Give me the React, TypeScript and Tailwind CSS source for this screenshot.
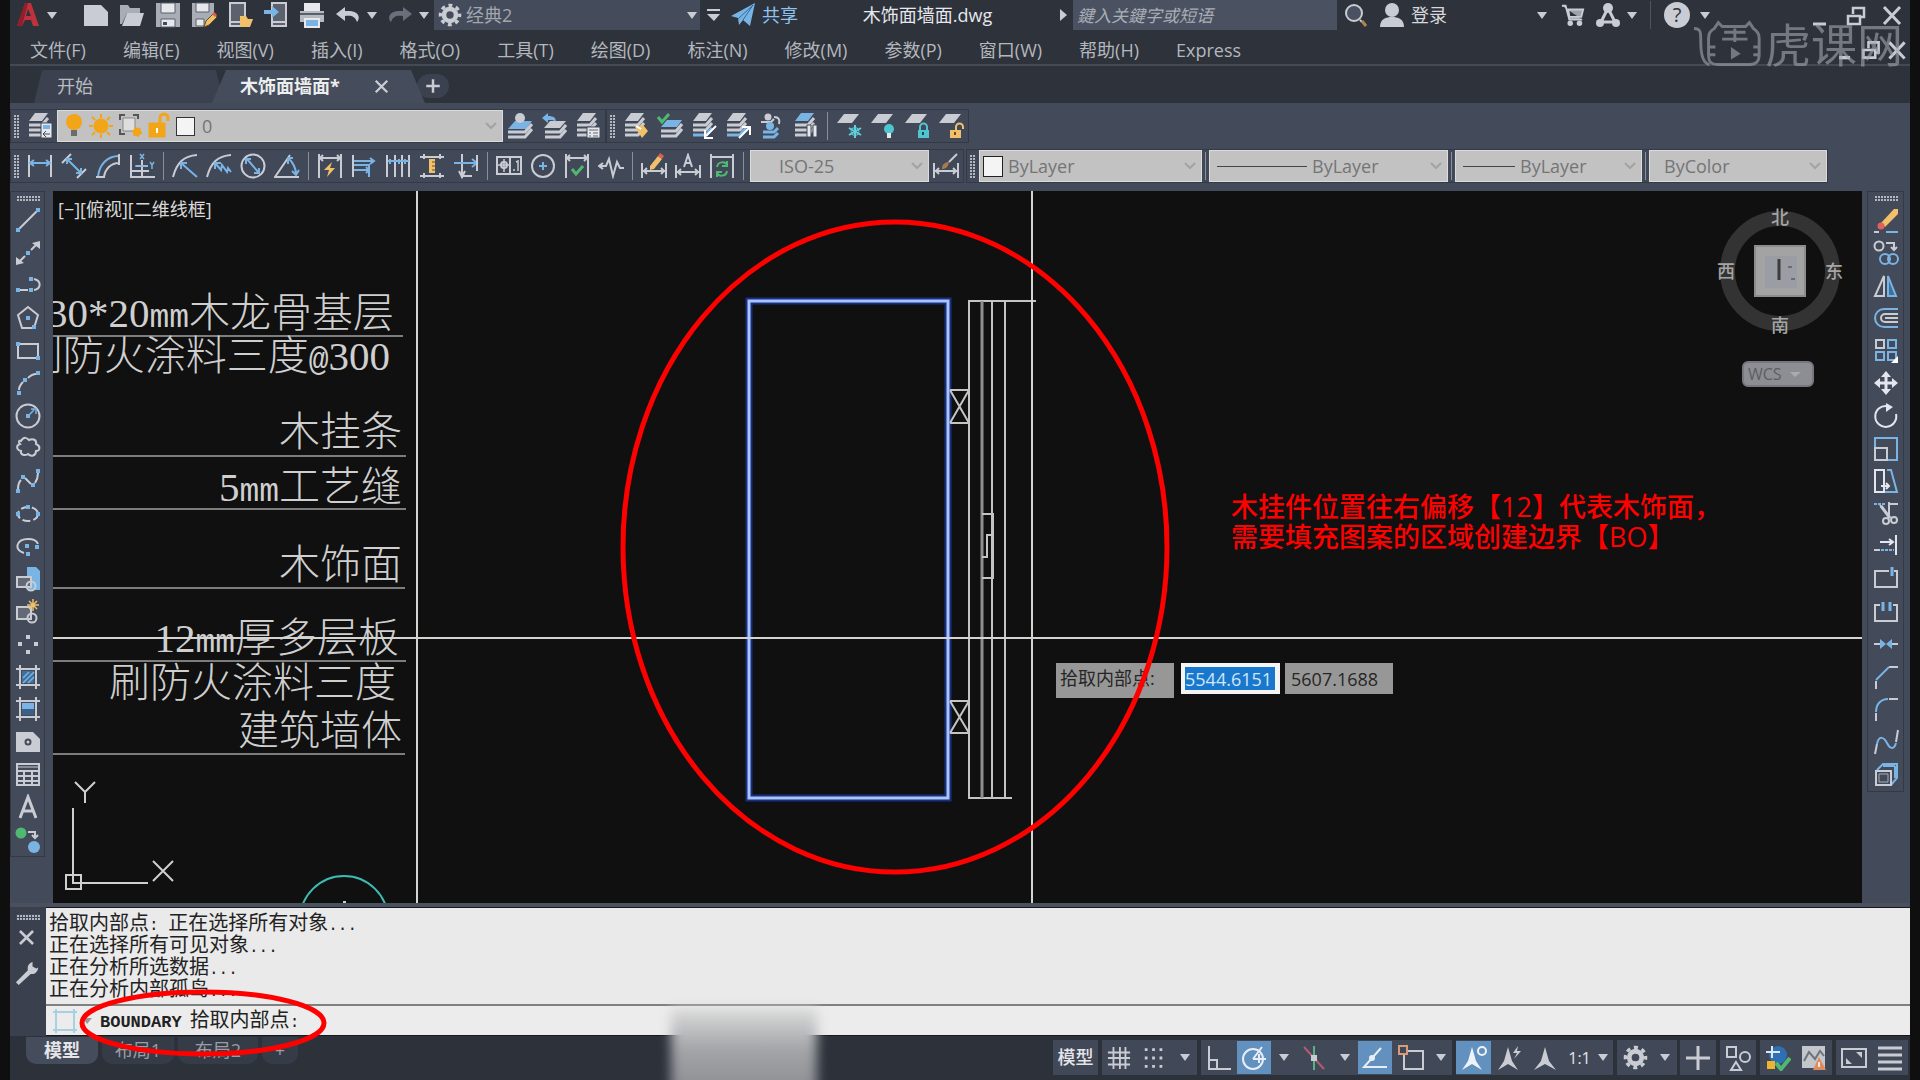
import type { ReactNode } from "react";
import clsx from "clsx";

const W = "#c9ccd3";
const B = "#7ab4e4";
const Y = "#f0c06a";
const G = "#4fb871";

interface IconProps {
  children: ReactNode;
  size?: number;
}

const Icon = ({ children, size = 26 }: IconProps) => (
  <svg
    width={size}
    height={size}
    viewBox="0 0 26 26"
    fill="none"
    stroke={W}
    strokeWidth="2"
    className="shrink-0"
    aria-hidden="true"
  >
    {children}
  </svg>
);

const Caret = () => (
  <svg width="10" height="7" viewBox="0 0 10 7" className="shrink-0" aria-hidden="true">
    <path d="M0 0h10L5 7z" fill={W} />
  </svg>
);

const Sheet = ({ y = 0, color = W }: { y?: number; color?: string }) => (
  <path d={`M8 ${1 + y}h15l-7 9H1z`} fill={color} stroke="none" />
);

const Layers = ({ top = W, mid = W, low = W }: { top?: string; mid?: string; low?: string }) => (
  <g strokeWidth="3">
    <path d="M8 0h13l-6 8H2z" fill={top} stroke="none" />
    <path d="M2 12h13l6-7" stroke={mid} />
    <path d="M2 17h13l6-7" stroke={mid} />
    <path d="M2 22h13l6-7" stroke={low} />
  </g>
);

const Gear = ({ size = 26 }: { size?: number }) => (
  <Icon size={size}>
    <circle cx="13" cy="13" r="6.5" strokeWidth="5" />
    <circle cx="13" cy="13" r="10.5" strokeWidth="3.5" strokeDasharray="4.2 4.05" strokeDashoffset="2" />
  </Icon>
);

// ---------- title bar icons ----------

const quickIcons: { name: string; icon: ReactNode }[] = [
  { name: "新建", icon: <path d="M1 3h17l7 7v14H1z" fill={W} stroke="none" /> },
  {
    name: "打开",
    icon: (
      <>
        <path d="M1 3h8l2 3h10v5H8L3 22H1z" fill="#a9adb5" stroke="none" />
        <path d="M8 11h17l-4 13H3z" fill={W} stroke="none" />
      </>
    ),
  },
  {
    name: "保存",
    icon: (
      <>
        <path d="M1 1h24v24H1z" fill="#a9adb5" stroke="none" />
        <path d="M6 1h14v10H6z" fill="#e6e8ec" stroke="#59606d" strokeWidth="1" />
        <path d="M6 17h14v8H6z" fill="#e6e8ec" stroke="#59606d" strokeWidth="1" />
        <path d="M8 20h4v3H8z" fill="#434a57" stroke="none" />
      </>
    ),
  },
  {
    name: "另存为",
    icon: (
      <>
        <path d="M1 1h22v12L12 25H1z" fill="#a9adb5" stroke="none" />
        <path d="M5 1h13v9H5zM5 17h8v7H5z" fill="#e6e8ec" stroke="#59606d" strokeWidth="1" />
        <path d="M13 25l2-6 8-8 3 4-8 8z" fill={Y} stroke="#6b4a20" strokeWidth="1" />
        <path d="M21 12l2-2 3 3-2 2z" fill="#e0604f" stroke="none" />
      </>
    ),
  },
  {
    name: "从移动设备打开",
    icon: (
      <>
        <path d="M3 1h15v23H3z" fill="#5b616d" stroke={W} />
        <path d="M3 20h15" />
        <path d="M13 14h6l2 3h5l-3 8H13z" fill={Y} stroke="none" />
      </>
    ),
  },
  {
    name: "保存到移动设备",
    icon: (
      <>
        <path d="M9 1h14v23H9z" fill="#5b616d" stroke={W} />
        <path d="M9 20h14" />
        <path d="M1 8h8V4l7 6-7 6v-4H1z" fill={B} stroke="none" />
      </>
    ),
  },
  {
    name: "打印",
    icon: (
      <>
        <path d="M5 1h16v8H5z" fill="#e6e8ec" stroke="none" />
        <path d="M1 9h24v11H1z" fill="#b6bac1" stroke="none" />
        <path d="M1 12h24" stroke="#59606d" />
        <path d="M6 17h14v8H6z" fill={B} stroke="#e6e8ec" />
      </>
    ),
  },
  {
    name: "放弃",
    icon: <path d="M10 5L1 12l9 7v-5c6-1 10 0 12 6 3-3 4-12-12-11z" fill={W} stroke="none" />,
  },
];

// ---------- layer toolbars ----------

const layerProps = (
  <>
    <Layers />
    <path d="M14 10h11v15H14z" fill="#e6e8ec" stroke="#434a5a" strokeWidth="1" />
    <path d="M16 12h7v4h-7z" fill={B} stroke="none" />
    <path d="M16 21h7M19 18l-3 3 3 3" stroke="#434a5a" strokeWidth="1" />
  </>
);

const layerIcons: ReactNode[] = [
  <>
    <path d="M8 8h17l-6 8H1z" fill={B} stroke="none" />
    <path d="M1 19h17l7-8M1 24h17l7-8" strokeWidth="3" />
    <circle cx="13" cy="5" r="5" fill={W} stroke="none" />
  </>,
  <>
    <path d="M9 8h16l-6 7H3z" fill={W} stroke="none" />
    <path d="M4 19h15l6-7M4 24h15l6-7" strokeWidth="3" />
    <path d="M1 5l6-5v3c6 0 8 2 8 6-2-2-4-2-8-2v3z" fill={B} stroke="none" />
  </>,
  <>
    <Layers />
    <path d="M12 14h13v11H12z" fill="#e6e8ec" stroke="#434a5a" strokeWidth="1" />
    <path d="M14 17h9M14 20h2m2 0h5M14 23h2m2 0h5" stroke="#636977" strokeWidth="1" />
  </>,
];

const layerIcons2: ReactNode[] = [
  <>
    <Layers />
    <path d="M12 14l8-2 5 6-6 7z" fill={Y} stroke="none" />
    <path d="M13 13l5 3" stroke="#fff" />
  </>,
  <>
    <path d="M1 4l4 5 7-8" stroke={G} strokeWidth="3" />
    <path d="M10 7h15l-5 7H4z" fill={B} stroke="none" />
    <path d="M4 18h15l6-7M4 23h15l6-7" strokeWidth="3" />
  </>,
  <>
    <Layers low={B} />
    <path d="M25 13L15 23M14 17v8h8" stroke="#fff" />
  </>,
  <>
    <Layers low={B} />
    <path d="M14 25l10-10M17 14h8v8" stroke="#fff" />
  </>,
  <>
    <circle cx="9" cy="4" r="3.5" fill={W} stroke="none" />
    <path d="M2 9h10l3-3" />
    <path d="M15 4c5 0 6 3 5 7" />
    <circle cx="11" cy="13" r="4" fill={B} stroke="none" />
    <path d="M4 19h11l4-4M4 24h11l4-4" stroke={B} strokeWidth="3" />
  </>,
  <>
    <Layers top={B} />
    <path d="M14 12h4v12h-4zM20 12h4v12h-4z" fill="#e6e8ec" stroke="#434a5a" strokeWidth="1" />
  </>,
];

const layerIcons3: ReactNode[] = [
  <>
    <Sheet />
    <g stroke="#5fd0dc" strokeWidth="2">
      <path d="M19 12v13M13 15l12 7M25 15l-12 7" />
      <circle cx="19" cy="18.5" r="4" strokeWidth="1" />
    </g>
  </>,
  <>
    <Sheet />
    <circle cx="19" cy="16" r="5" fill="#4fc6cf" stroke="none" />
    <path d="M19 20v5" stroke="#e6e8ec" strokeWidth="4" />
  </>,
  <>
    <Sheet />
    <path d="M16 18v-4a3 3 0 0 1 7 0v4" stroke="#4fc6cf" />
    <path d="M14 17h11v8H14z" fill="#4fc6cf" stroke="none" />
    <path d="M19 19v3" stroke="#23474b" />
  </>,
  <>
    <Sheet />
    <path d="M18 18v-4a3 3 0 0 1 7 0v2" stroke={Y} />
    <path d="M12 17h11v8H12z" fill={Y} stroke="none" />
    <path d="M17 19v3" stroke="#6b4a20" />
  </>,
];

// ---------- dimension toolbar ----------

const dimA: ReactNode[] = [
  <>
    <path d="M2 2v22M24 2v22" />
    <path d="M3 10h20M7 7l-4 3 4 3M19 7l4 3-4 3" stroke={B} />
  </>,
  <>
    <path d="M1 10l9-9M16 25l9-9" />
    <path d="M6 6l14 14M6 11V6h5M15 20h5v-5" stroke={B} />
  </>,
  <>
    <path d="M3 24C4 12 12 3 24 3" stroke={B} />
    <path d="M1 24h9M9 24c1-8 7-14 15-14M24 1v11" />
  </>,
  <>
    <path d="M2 2v22h24M7 13h12M13 7v17M2 18h18" />
    <path d="M11 1l4 5M15 1l-4 5M21 9l2 3 2-3M23 12v4M6 13h13" stroke={B} strokeWidth="1.5" />
  </>,
];

const dimB: ReactNode[] = [
  <>
    <path d="M25 2C12 3 5 9 1 24" />
    <path d="M25 24L9 10M9 16v-6h6" stroke={B} />
  </>,
  <>
    <path d="M25 2C12 3 5 9 1 24" />
    <path d="M9 10l6 7 1-5 5 7 1-4 3 4M9 16v-6h6" stroke={B} />
  </>,
  <>
    <circle cx="13" cy="13" r="11.5" />
    <path d="M7 6l12 14M6 11V6h5M14 20h5v-5" stroke={B} />
  </>,
  <>
    <path d="M16 2L1 24h24" />
    <path d="M15 6c4 3 7 10 7 15M19 5h-5v6M18 18l4 4 3-5" stroke={B} />
  </>,
];

const dimC: ReactNode[] = [
  <>
    <path d="M2 1v24M24 1v24M2 5h22M6 2L3 5l3 3M20 2l3 3-3 3" />
    <path d="M15 9l-8 8h5l-2 7 8-9h-5z" fill={Y} stroke="none" />
  </>,
  <>
    <path d="M2 2v22" />
    <path d="M3 8h20M19 5l4 3-4 3M3 17h14M15 14l3 3-3 3M3 12h15v12" stroke={B} />
  </>,
  <>
    <path d="M2 2v22M10 2v22M17 2v22M24 2v22" />
    <path d="M3 8h21M5 6v5M14 6v5M20 6v5" stroke={B} />
  </>,
  <>
    <path d="M1 4h24M1 23h24M5 1v5M21 1v5M5 20v5M21 20v5" />
    <path d="M10 6h6v14h-6z" fill={Y} stroke="none" />
    <path d="M13 9h3M13 13h3M13 17h3" stroke="#6b4a20" strokeWidth="1" />
  </>,
  <>
    <path d="M9 1v24M9 23h10M6 18l3 6 3-6" />
    <path d="M1 10h22M19 6l5 4-5 4" stroke={B} />
    <path d="M24 2v16" />
  </>,
];

const dimD: ReactNode[] = [
  <>
    <path d="M1 4h24v17H1zM14 4v17" />
    <circle cx="8" cy="12" r="3" />
    <path d="M8 6v13M2 12h11M18 16v2M20 9l2-1v10" strokeWidth="1.5" />
  </>,
  <>
    <circle cx="13" cy="13" r="11" />
    <path d="M13 9v8M9 13h8" stroke={B} />
  </>,
  <>
    <path d="M2 1v24M24 1v24M2 5h22M6 2L3 5l3 3M20 2l3 3-3 3" />
    <path d="M8 16l4 5 7-8" stroke={G} strokeWidth="3" />
  </>,
  <path d="M1 13h7l3-7 4 17 4-14 3 6h4M5 10l-4 3 4 3" />,
];

const dimE: ReactNode[] = [
  <>
    <path d="M1 10v15M25 10v15M2 18h22M6 15l-3 3 3 3M20 15l3 3-3 3" />
    <path d="M9 13l8-10 4 3-8 10-4 1z" fill={Y} stroke="none" />
    <path d="M17 3l2-3 4 3-2 3z" fill="#e0604f" stroke="none" />
  </>,
  <>
    <path d="M1 12v13M25 12v13M2 19h22M6 16l-3 3 3 3M20 16l3 3-3 3" />
    <path d="M9 14l4-12 4 12M10 10h6" />
  </>,
  <>
    <path d="M2 1v24M24 1v24M2 4h22" />
    <path d="M8 14c1-6 9-6 10-1M18 18c-1 6-9 6-10 1M18 8v5h-5M8 24v-5h5" stroke={G} />
  </>,
];

const dimStyle = (
  <>
    <path d="M1 10v15M25 10v15M2 18h22M6 15l-3 3 3 3M20 15l3 3-3 3" />
    <path d="M9 16c0-5 3-7 7-7-1 5-3 7-7 7z" fill="#a87a4e" stroke="none" />
    <path d="M16 9l8-8" />
  </>
);

// ---------- draw toolbar (left) ----------

const node = (x: number, y: number) => (
  <rect x={x - 2} y={y - 2} width="4" height="4" fill={B} stroke="none" />
);

const drawTools: { name: string; icon: ReactNode }[] = [
  { name: "直线", icon: <><path d="M4 22L22 4" />{node(3, 23)}{node(23, 3)}</> },
  {
    name: "构造线",
    icon: <><path d="M3 23l7-7M16 10l7-7" /><path d="M25 1v8l-8-6zM1 25v-8l8 6z" fill={W} stroke="none" />{node(13, 13)}</>,
  },
  { name: "多段线", icon: <><path d="M5 18h8M19 7c8 2 7 10 0 11" />{node(3, 18)}{node(16, 18)}{node(16, 7)}</> },
  { name: "多边形", icon: <><path d="M13 2l10 8-4 13H7L3 10z" />{node(13, 13)}{node(19, 22)}</> },
  { name: "矩形", icon: <><path d="M3 6h20v14H3z" />{node(3, 6)}{node(23, 20)}</> },
  { name: "圆弧", icon: <><path d="M4 20c0-3 2-6 4-8M13 8c2-2 5-4 8-4" />{node(4, 23)}{node(10, 10)}{node(23, 3)}</> },
  {
    name: "圆",
    icon: <><circle cx="13" cy="13" r="11.5" /><path d="M13 13l6-6M16 6h5v5" stroke={B} strokeWidth="1.5" />{node(13, 13)}</>,
  },
  { name: "修订云线", icon: <path d="M6 6c3-5 6-3 8-1 4-2 8 0 7 4 5 2 4 7 0 7 0 5-5 6-8 3-3 2-8 1-7-3-5-1-5-6-1-7-2-2-1-4 1-3z" /> },
  {
    name: "样条曲线",
    icon: <><path d="M3 21c0-4 1-7 3-9M10 10l6 6M20 15c2-3 3-6 3-10" />{node(3, 23)}{node(8, 9)}{node(18, 17)}{node(23, 3)}</>,
  },
  { name: "椭圆", icon: <><ellipse cx="13" cy="13" rx="10" ry="7" strokeDasharray="8 3" />{node(3, 13)}{node(23, 13)}{node(13, 6)}</> },
  { name: "椭圆弧", icon: <><path d="M9 20C-2 16 2 6 13 6c6 0 9 2 10 5" />{node(12, 13)}{node(22, 14)}{node(13, 21)}</> },
  {
    name: "插入块",
    icon: <><path d="M12 1h9l4 4v19H12z" fill={B} stroke="none" /><path d="M2 11h14v10H2z" fill="#636977" /><circle cx="16" cy="20" r="4.5" /></>,
  },
  {
    name: "创建块",
    icon: <><path d="M2 9h14v12H2z" fill="#636977" /><circle cx="17" cy="20" r="4.5" /><path d="M18 1v12M12 7h12M14 3l8 8M22 3l-8 8" stroke={Y} strokeWidth="1.5" /></>,
  },
  {
    name: "点",
    icon: <g fill={W} stroke="none"><rect x="11" y="4" width="4" height="4" /><rect x="11" y="19" width="4" height="4" /><rect x="3" y="11" width="4" height="4" /><rect x="19" y="11" width="4" height="4" /></g>,
  },
  {
    name: "图案填充",
    icon: <><path d="M7 7h12v12H7z" fill="#3f6f9b" stroke="none" /><path d="M8 14l6-6M8 19L19 8M13 19l6-6" stroke={B} strokeWidth="1.5" /><path d="M1 5h24M1 21h24M5 1v24M21 1v24" /></>,
  },
  {
    name: "渐变色",
    icon: <><path d="M7 7h12v12H7z" fill="#3b5f86" stroke="none" /><path d="M7 7h12v6H7z" fill={B} stroke="none" /><path d="M1 5h24M1 21h24M5 1v24M21 1v24" /></>,
  },
  { name: "区域", icon: <><path d="M1 3h17l7 7v13H1z" fill={W} stroke="none" /><circle cx="13" cy="13" r="2.5" fill={W} stroke="#434a5a" /></> },
  { name: "表格", icon: <><path d="M2 3h22v21H2zM2 10h22M2 15h22M2 20h22M9 10v14M17 10v14" /><path d="M3 6h20" strokeWidth="1" /></> },
  { name: "多行文字", icon: <path d="M5 24l8-21 8 21M8 17h10" strokeWidth="3" /> },
  {
    name: "添加选定对象",
    icon: <><circle cx="6" cy="6" r="5.5" fill={G} stroke="none" /><circle cx="19" cy="20" r="6" fill={B} stroke="none" /><path d="M13 5h7v5M17 8l3 3 3-3" /></>,
  },
];

// ---------- modify toolbar (right) ----------

const modifyTools: { name: string; icon: ReactNode }[] = [
  {
    name: "删除",
    icon: <><path d="M8 16L21 2h4v5L12 20z" fill={Y} stroke="none" /><circle cx="8" cy="19" r="3.5" fill="#e0605f" stroke="none" /><path d="M1 25h5" /><path d="M13 25h12" stroke={B} /></>,
  },
  {
    name: "复制",
    icon: <><circle cx="6" cy="6" r="4.5" /><path d="M13 3h8v6M18 7l3 3 3-3" /><g stroke={B}><circle cx="12" cy="19" r="5" /><circle cx="20" cy="19" r="5" /></g></>,
  },
  { name: "镜像", icon: <><path d="M11 3v20H2z" /><path d="M15 3v20h8z" fill="#3f6f9b" stroke={B} /></> },
  { name: "偏移", icon: <><path d="M25 4H11a9 9 0 0 0 0 18h14" stroke={B} /><path d="M25 9H12a4 4 0 0 0 0 8h13" /><path d="M25 13H12" /></> },
  {
    name: "阵列",
    icon: <><path d="M3 2h8v8H3z" /><path d="M15 2h8v8h-8zM3 14h8v8H3zM15 14h8v8h-8z" stroke={B} /><path d="M25 18v7h-7z" fill="#fff" stroke="none" /></>,
  },
  {
    name: "移动",
    icon: <><path d="M13 4v18M4 13h18" stroke="#e3e6ee" strokeWidth="3" /><path d="M13 1l5 6H8zM13 25l5-6H8zM1 13l6-5v10zM25 13l-6-5v10z" fill="#e3e6ee" stroke="none" /></>,
  },
  { name: "旋转", icon: <><path d="M14 3a10.5 10.5 0 1 0 9 8" stroke="#e3e6ee" /><path d="M13 0l7 4-7 5z" fill="#e3e6ee" stroke="none" /></> },
  { name: "缩放", icon: <><path d="M2 12V2h22v22H14" stroke={B} /><path d="M2 12h12v12H2z" /></> },
  { name: "拉伸", icon: <><path d="M14 2h4l6 22H12" stroke={B} /><path d="M2 2h9v22H2zM8 18h8M13 15l3 3-3 3" stroke="#e3e6ee" /></> },
  {
    name: "修剪",
    icon: <><path d="M1 3h12" stroke={B} strokeDasharray="3 1" /><path d="M17 3h8M16 1v13M7 4l10 13" /><path d="M8 5l9 12" strokeWidth="3" /><circle cx="13" cy="20" r="3" /><circle cx="21" cy="19" r="3" /></>,
  },
  { name: "延伸", icon: <><path d="M23 2v20M7 9h12M16 6l4 3-4 3" stroke="#e3e6ee" /><path d="M1 17h6" /><path d="M8 17h13" stroke={B} strokeDasharray="3 1" /></> },
  { name: "打断于点", icon: <><path d="M16 5H2v16h22V5h-3" /><path d="M19 1v9" stroke={B} strokeWidth="3" /></> },
  { name: "打断", icon: <><path d="M7 6H2v16h22V6h-4" /><path d="M10 3v9M17 3v9" stroke={B} strokeWidth="3" /></> },
  { name: "合并", icon: <><path d="M1 13h7M18 13h7" /><path d="M7 8l6 5-6 5zM19 8l-6 5 6 5z" fill={B} stroke="none" /></> },
  { name: "倒角", icon: <><path d="M3 25v-8M16 3h9" /><path d="M3 16L16 3" stroke={B} /></> },
  { name: "圆角", icon: <><path d="M3 25v-8M16 3h9" /><path d="M3 16C3 8 8 3 15 3" stroke={B} /></> },
  { name: "光顺曲线", icon: <><path d="M2 25l2-10M25 1l-2 12" /><path d="M4 15c2-9 7-7 10-1s7 7 9 0" stroke={B} /></> },
  { name: "分解", icon: <><path d="M4 8l6-6h14v14l-6 7M10 4h12M22 4v12" stroke={B} /><path d="M3 9h15v14H3z" /><path d="M6 12h9v8H6z" stroke="#a6acb8" strokeWidth="1" /></> },
];

const menus = [
  "文件(F)", "编辑(E)", "视图(V)", "插入(I)", "格式(O)", "工具(T)", "绘图(D)",
  "标注(N)", "修改(M)", "参数(P)", "窗口(W)", "帮助(H)", "Express",
];

const history = ["拾取内部点: 正在选择所有对象...", "正在选择所有可见对象...", "正在分析所选数据...", "正在分析内部孤岛..."];

interface ToolButtonProps {
  label: string;
  children: ReactNode;
  className?: string;
}

const ToolButton = ({ label, children, className }: ToolButtonProps) => (
  <button type="button" aria-label={label} className={clsx("flex shrink-0 items-center justify-center", className)}>
    {children}
  </button>
);

const IconRow = ({ icons, name }: { icons: ReactNode[]; name: string }) => (
  <>
    {icons.map((icon, i) => (
      <ToolButton key={i} label={`${name} ${i + 1}`} className="h-8 w-[34px]">
        <Icon>{icon}</Icon>
      </ToolButton>
    ))}
  </>
);

const Separator = ({ tight = false }: { tight?: boolean }) => (
  <span className={clsx("h-7 w-px shrink-0 bg-[#8a8f99]", tight ? "mx-[3px]" : "mx-1")} />
);

// light dots, cut out of a solid block by a 3px grid
const gripDots =
  "shrink-0 bg-[#b4b8c0] bg-[linear-gradient(#414857_1px,transparent_1px),linear-gradient(90deg,#414857_1px,transparent_1px)] bg-[size:3px_3px]";

const Grip = () => <span className={clsx(gripDots, "mr-[4px] ml-[2px] h-6 w-[6px]")} />;

const TopGrip = () => <span className={clsx(gripDots, "mx-auto my-[3px] h-[6px] w-6")} />;

interface ComboProps {
  label: string;
  value: string;
  className?: string;
  selectClass: string;
  children?: ReactNode;
}

const Combo = ({ label, value, className, selectClass, children }: ComboProps) => (
  <div className={clsx("relative h-full shrink-0", className)}>
    <select
      aria-label={label}
      className={clsx("h-full w-full appearance-none border border-[#dcdcdc] bg-[#c2c2c2] pt-px text-[18px] text-[#757575]", selectClass)}
    >
      <option>{value}</option>
    </select>
    <div className="pointer-events-none absolute inset-y-0 left-0 flex items-center">{children}</div>
    <svg
      width="12"
      height="8"
      viewBox="0 0 12 8"
      className="pointer-events-none absolute top-1/2 right-[6px] -translate-y-1/2"
      fill="none"
      stroke="#a3a3a3"
      strokeWidth="2"
    >
      <path d="M1 1l5 5 5-5" />
    </svg>
  </div>
);

function TitleBar() {
  return (
    <header className="mb-1 flex h-[30px] items-center text-[18px] text-[#d6d8dc]">
      <ToolButton label="应用程序菜单" className="w-9">
        <svg width="24" height="26" viewBox="0 0 24 26" aria-hidden="true">
          <path d="M9 1h6l8 23h-6l-2-6H9l-3 6H1zM12 7l-2 7h5z" fill="#c0323b" fillRule="evenodd" />
          <path d="M9 1h3L6 24H1z" fill="#8e1f2b" />
        </svg>
      </ToolButton>
      <ToolButton label="展开应用程序菜单" className="mr-5 w-3"><Caret /></ToolButton>
      {quickIcons.map((q) => (
        <ToolButton key={q.name} label={q.name} className="w-9">
          <Icon>{q.icon}</Icon>
        </ToolButton>
      ))}
      <ToolButton label="放弃列表" className="mr-1 w-3"><Caret /></ToolButton>
      <ToolButton label="重做" className="w-9">
        <Icon><path d="M16 5l9 7-9 7v-5c-6-1-10 0-12 6-3-3-4-12 12-11z" fill="#6a707b" stroke="none" /></Icon>
      </ToolButton>
      <ToolButton label="重做列表" className="mr-1 w-3"><Caret /></ToolButton>
      <div className="relative h-full w-[266px] shrink-0">
        <select aria-label="工作空间" className="h-full w-full appearance-none bg-[#444b5a] pl-8 text-[18px] text-[#a3a7af]">
          <option>经典2</option>
        </select>
        <span className="pointer-events-none absolute inset-y-0 left-1 flex items-center"><Gear size={24} /></span>
        <span className="pointer-events-none absolute inset-y-0 right-[3px] flex items-center"><Caret /></span>
      </div>
      <ToolButton label="自定义快速访问工具栏" className="mr-1 w-[26px]">
        <svg width="13" height="13" viewBox="0 0 13 13" fill={W} aria-hidden="true">
          <path d="M0 0h13v2H0zM0 5h13l-6 7z" />
        </svg>
      </ToolButton>
      <button type="button" className="flex shrink-0 items-center gap-[6px] text-[#8fc3ee]">
        <Icon><path d="M1 14L25 1l-5 23-7-6-4 5-1-7z" fill={B} stroke="none" /><path d="M8 17L23 3l-10 15" stroke="#2d6c9f" strokeWidth="1" /></Icon>
        共享
      </button>
      <h1 className="min-w-0 flex-1 truncate pl-[3px] text-center text-[18px] text-[#e6e7ea]">木饰面墙面.dwg</h1>
      <svg width="7" height="12" viewBox="0 0 7 12" className="mx-[6px] shrink-0" aria-hidden="true">
        <path d="M0 0l7 6-7 6z" fill={W} />
      </svg>
      <input
        aria-label="搜索"
        placeholder="鍵入关鍵字或短语"
        className="h-full w-[264px] shrink-0 bg-[#4a5262] px-1 text-[17px] text-[#b4b8bf] italic placeholder:text-[#a9adb5]"
      />
      <ToolButton label="搜索" className="w-9">
        <Icon><circle cx="12" cy="11" r="8" fill="#4a5262" /><path d="M18 18l2 2" /><path d="M20 19l4 5" stroke="#b38450" strokeWidth="3" /></Icon>
      </ToolButton>
      <button type="button" className="flex w-[76px] shrink-0 items-center gap-[6px] pl-[6px]">
        <Icon><circle cx="13" cy="8" r="7" fill={W} stroke="none" /><path d="M1 25c0-8 6-10 12-10s12 2 12 10z" fill={W} stroke="none" /></Icon>
        登录
      </button>
      <ToolButton label="登录选项" className="mr-2 ml-[87px] w-3"><Caret /></ToolButton>
      <ToolButton label="应用商店" className="w-[34px]">
        <Icon size={24}><path d="M1 3h4l4 15h14M8 7h16l-2 8H9z" fill="#9da1a9" /><circle cx="10" cy="22" r="2" fill={W} /><circle cx="20" cy="22" r="2" fill={W} /></Icon>
      </ToolButton>
      <ToolButton label="保持连接" className="w-9">
        <Icon><path d="M13 6L6 20h14z" strokeWidth="3" /><g fill={W} stroke="none"><circle cx="13" cy="6" r="5" /><circle cx="5" cy="21" r="4" /><circle cx="21" cy="21" r="4" /></g></Icon>
      </ToolButton>
      <ToolButton label="连接选项" className="w-3"><Caret /></ToolButton>
      <span className="mr-2 ml-3 h-7 w-px bg-[#4d5460]" />
      <ToolButton label="帮助" className="w-9">
        <span className="flex h-[26px] w-[26px] items-center justify-center rounded-full bg-[#c9ccd3] text-[20px] text-[#2d323b]">?</span>
      </ToolButton>
      <ToolButton label="帮助选项" className="mr-[91px] ml-1 w-3"><Caret /></ToolButton>
      <ToolButton label="最小化" className="w-9"><Icon><path d="M6 22h13" strokeWidth="3" /></Icon></ToolButton>
      <ToolButton label="还原" className="w-9"><Icon><path d="M5 14h12v8H5zM10 12V6h11v9h-3" strokeWidth="2.5" /></Icon></ToolButton>
      <ToolButton label="关闭" className="w-9"><Icon><path d="M5 5l16 17M21 5L5 22" strokeWidth="3" /></Icon></ToolButton>
    </header>
  );
}

function MenuBar() {
  return (
    <nav className="flex h-8 items-center gap-[37px] border-b-2 border-[#444a55] pt-[2px] pl-5 text-[18px] text-[#b4b7bd]">
      {menus.map((m) => (
        <button key={m} type="button" className="shrink-0">{m}</button>
      ))}
      <div className="ml-auto flex">
        <ToolButton label="最小化图形" className="w-[26px]"><Icon size={22}><path d="M6 22h13" strokeWidth="4" /></Icon></ToolButton>
        <ToolButton label="还原图形" className="w-[26px]"><Icon size={22}><path d="M4 13h14v9H4zM10 11V4h12v12h-3" strokeWidth="3" /></Icon></ToolButton>
        <ToolButton label="关闭图形" className="w-[26px]"><Icon size={22}><path d="M4 4l18 19M22 4L4 23" strokeWidth="3.5" /></Icon></ToolButton>
      </div>
    </nav>
  );
}

function FileTabs() {
  return (
    <div className="flex h-[37px] items-end text-[18px]">
      <button
        type="button"
        className="ml-6 h-[33px] w-[190px] rounded-t-[10px] bg-[#3b414e] pl-[23px] text-left text-[#b9bcc2] [clip-path:polygon(8px_0,182px_0,190px_100%,0_100%)]"
      >
        开始
      </button>
      <div className="-ml-[12px] flex h-[33px] w-[213px] items-center justify-between rounded-t-[10px] bg-[#454c5b] pr-9 pl-[28px] font-bold text-[#eceded] [clip-path:polygon(14px_0,199px_0,100%_100%,0_100%)]">
        <button type="button">木饰面墙面*</button>
        <ToolButton label="关闭选项卡"><Icon size={15}><path d="M3 3l20 20M23 3L3 23" strokeWidth="4" /></Icon></ToolButton>
      </div>
      <ToolButton label="新图形" className="-ml-2 mb-[5px] h-6 w-8 rounded-full bg-[#3b414e]">
        <Icon size={16}><path d="M13 2v22M2 13h22" strokeWidth="4" /></Icon>
      </ToolButton>
    </div>
  );
}

function Toolbars() {
  const panel = "flex h-[34px] items-center border border-[#333945] bg-[#414857]";
  return (
    <div className="flex flex-col gap-[6px] pt-[6px] pb-2">
      <div className="flex">
        <div className={panel}>
          <Grip />
          <IconRow icons={[layerProps]} name="图层特性" />
          <Combo label="图层" value="0" className="w-[446px]" selectClass="pl-[144px]">
            <div className="flex items-center gap-1 pl-[7px]">
              <svg width="20" height="28" viewBox="0 0 20 28"><circle cx="10" cy="10" r="8" fill="#f2a516" /><path d="M7 18h6v6H7z" fill="#6c6c6c" /></svg>
              <svg width="26" height="28" viewBox="0 0 26 28" stroke="#f2a516" strokeWidth="2">
                <circle cx="13" cy="14" r="6.5" fill="#f2a516" />
                <path d="M13 2v4M13 22v4M1 14h4M21 14h4M4 5l3 3M19 20l3 3M22 5l-3 3M7 20l-3 3" />
              </svg>
              <svg width="26" height="28" viewBox="0 0 26 28" fill="none" stroke="#555" strokeWidth="2">
                <path d="M2 8V3h5M15 3h5v4M2 17v5h5" />
                <path d="M5 6h12v13H5z" fill="#dedede" stroke="#888" strokeWidth="1" />
                <circle cx="19" cy="20" r="4" fill="#f2a516" stroke="#f2a516" strokeDasharray="2 2" />
              </svg>
              <svg width="22" height="28" viewBox="0 0 22 28" fill="none" stroke="#f2a516" strokeWidth="3">
                <path d="M12 13V6a4 4 0 0 1 8 0v3" />
                <path d="M2 12h14v12H2z" fill="#f2a516" />
                <path d="M9 16v5" stroke="#fff" strokeWidth="2" />
              </svg>
              <span className="ml-[2px] h-[19px] w-[19px] border border-[#333] bg-[#f4f4f4]" />
            </div>
          </Combo>
          <IconRow icons={layerIcons} name="图层" />
        </div>
        <div className={panel}>
          <Grip />
          <IconRow icons={layerIcons2} name="图层工具" />
          <Separator />
          <IconRow icons={layerIcons3} name="图层状态" />
        </div>
      </div>

      <div className="flex gap-[2px]">
        <div className={panel}>
          <Grip />
          <IconRow icons={dimA} name="线性标注" />
          <Separator />
          <IconRow icons={dimB} name="半径标注" />
          <Separator />
          <IconRow icons={dimC} name="快速标注" />
          <Separator />
          <IconRow icons={dimD} name="公差" />
          <Separator />
          <IconRow icons={dimE} name="编辑标注" />
          <Separator />
          <Combo label="标注样式" value="ISO-25" className="ml-[2px] w-[179px]" selectClass="pl-7" />
          <IconRow icons={[dimStyle]} name="标注样式管理" />
        </div>
        <div className={panel}>
          <Grip />
          <Combo label="颜色" value="ByLayer" className="w-[223px]" selectClass="pl-[28px]">
            <span className="ml-1 h-[21px] w-5 border border-[#222] bg-[#f4f4f4]" />
          </Combo>
          <Separator tight />
          <Combo label="线型" value="ByLayer" className="w-[239px]" selectClass="pl-[102px]">
            <span className="ml-2 h-px w-[90px] bg-[#444]" />
          </Combo>
          <Separator tight />
          <Combo label="线宽" value="ByLayer" className="w-[187px]" selectClass="pl-16">
            <span className="ml-2 h-px w-[52px] bg-[#444]" />
          </Combo>
          <Separator tight />
          <Combo label="打印样式" value="ByColor" className="w-[178px]" selectClass="pl-[14px]" />
        </div>
      </div>
    </div>
  );
}

// Annotation text: serif digits beside wide Chinese glyphs
const Num = ({ children }: { children: ReactNode }) => (
  <tspan fontFamily="Liberation Serif" fontSize="41">{children}</tspan>
);
const Unit = ({ children }: { children: ReactNode }) => (
  <tspan fontFamily="Liberation Mono" fontSize="33">{children}</tspan>
);

function Drawing() {
  return (
    <svg className="absolute inset-0 h-full w-full" fill="none" aria-label="图形">
      <g stroke="#7d7d7d" strokeWidth="2">
        <path d="M0 145h350M0 265h353M0 318h353M0 397h352M0 470h353M0 563h352" />
      </g>
      <g
        fill="#cfcfcf"
        fontSize="41"
        fontWeight="300"
        fontFamily="'Noto Sans CJK SC', sans-serif"
        textAnchor="end"
      >
        <text x="341" y="136"><Num>30*20</Num><Unit>mm</Unit>木龙骨基层</text>
        <text x="337" y="179">刷防火涂料三度<Unit>@</Unit><Num>300</Num></text>
        <text x="349" y="255">木挂条</text>
        <text x="349" y="310"><Num>5</Num><Unit>mm</Unit>工艺缝</text>
        <text x="349" y="388">木饰面</text>
        <text x="346" y="461"><Num>12</Num><Unit>mm</Unit>厚多层板</text>
        <text x="343" y="506">刷防火涂料三度</text>
        <text x="349" y="554">建筑墙体</text>
      </g>

      {/* wall outline and selected boundary */}
      <rect x="696" y="110" width="199" height="497" stroke="#16307f" strokeWidth="7" />
      <rect x="696" y="110" width="199" height="497" stroke="#a9c4fb" strokeWidth="3" />

      <g stroke="#c4c4c4" strokeWidth="2">
        <path d="M983 110h-67v497h43M939 110v497M952 110v497" />
        <path d="M929 110v497" stroke="#8f8f8f" strokeWidth="3" />
        <path d="M897 199h19v33h-19M897 199l19 33M916 199l-19 33" />
        <path d="M897 510h19v32h-19M897 510l19 32M916 510l-19 32" />
        <path d="M929 323h11v64h-11M939 344h-5v22h-5" />
      </g>

      <circle cx="291" cy="729" r="44" stroke="#3dbab2" strokeWidth="2" />
      <path d="M290 711h3" stroke="#ccc" strokeWidth="2" />

      {/* wall line and crosshair */}
      <g stroke="#d4d4d0" strokeWidth="2">
        <line x1="364" y1="0" x2="364" y2="100%" />
        <line x1="979" y1="0" x2="979" y2="100%" />
        <line x1="0" y1="447" x2="100%" y2="447" />
      </g>

      {/* UCS icon */}
      <g stroke="#cfcfcf" strokeWidth="2">
        <path d="M20 617v75h75M13 684h15v14H13zM22 591l10 10v11M42 591l-10 10M100 670l20 20M120 670l-20 20" />
      </g>
    </svg>
  );
}

function ViewCube() {
  const label = "text-[18px] leading-5 font-medium text-[#a5a5a5]";
  return (
    <div className="absolute top-4 right-[18px] flex w-32 flex-col items-center">
      <div className="relative grid h-32 w-32 grid-cols-[20px_1fr_20px] grid-rows-[20px_1fr_20px] place-items-center">
        <div className="absolute inset-1 rounded-full border-[15px] border-[#333333]" />
        <span className={clsx(label, "relative col-start-2 row-start-1")}>北</span>
        <span className={clsx(label, "relative col-start-1 row-start-2")}>西</span>
        <button type="button" aria-label="俯视" className="relative col-start-2 row-start-2 h-[52px] w-[52px] border-2 border-[#8c8c8c] bg-[#a3a3a3]">
          <svg width="48" height="48" viewBox="0 0 48 48" aria-hidden="true">
            <path d="M9 9h32v32H9z" fill="#9a9da3" />
            <path d="M23 12v21" stroke="#3c3c3c" strokeWidth="3" />
            <path d="M32 20h4M35 32h4" stroke="#3c3c3c" strokeWidth="1" />
          </svg>
        </button>
        <span className={clsx(label, "relative col-start-3 row-start-2")}>东</span>
        <span className={clsx(label, "relative col-start-2 row-start-3")}>南</span>
      </div>
      <button
        type="button"
        className="mt-[26px] mr-1 flex h-[26px] w-[72px] items-center gap-2 rounded-md border-2 border-[#77777d] bg-[#8d8d94] pl-1 text-[16px] text-[#5d5d63]"
      >
        WCS
        <svg width="11" height="5" viewBox="0 0 11 5" aria-hidden="true"><path d="M0 0h11L5 5z" fill="#aaaab0" /></svg>
      </button>
    </div>
  );
}

function Canvas() {
  return (
    <main className="relative min-w-0 flex-1 overflow-hidden bg-[#101010]">
      <Drawing />
      <p className="absolute top-2 left-[5px] text-[18px] leading-5 text-[#d8d8d8]">[−][俯视][二维线框]</p>
      <ViewCube />

      <form className="absolute top-[472px] left-[1003px] flex items-start text-[18px]">
        <label htmlFor="pick-x" className="mr-[7px] h-[35px] w-[118px] bg-[#979797] pl-1 leading-[30px] text-[#262626]">
          拾取内部点:
        </label>
        <span className="mr-[5px] h-[31px] w-[99px] bg-[#f4f4f4] p-1">
          <input id="pick-x" defaultValue="5544.6151" className="block h-full w-[90px] bg-[#1a78cc] text-[#cfe6fa]" />
        </span>
        <input aria-label="Y 坐标" defaultValue="5607.1688" className="h-[31px] w-[108px] bg-[#979797] pl-[6px] text-[#262626]" />
      </form>

      <p className="absolute top-[301px] left-[1178px] text-[27px] leading-[30px] font-medium whitespace-nowrap text-[#ff0000]">
        木挂件位置往右偏移【12】代表木饰面，
        <br />
        需要填充图案的区域创建边界【BO】
      </p>

      <svg className="pointer-events-none absolute inset-0 h-full w-full" fill="none" aria-hidden="true">
        <ellipse cx="842" cy="356" rx="272" ry="325" stroke="#ff0000" strokeWidth="5" />
      </svg>
    </main>
  );
}

const SideTools = ({ tools }: { tools: { name: string; icon: ReactNode }[] }) => (
  <>
    <TopGrip />
    {tools.map((t) => (
      <ToolButton key={t.name} label={t.name} className="min-h-0 flex-1">
        <Icon>{t.icon}</Icon>
      </ToolButton>
    ))}
  </>
);

// Console text keeps ASCII at half the width of a Chinese glyph
const ConsoleText = ({ text }: { text: string }) => (
  <>
    {text.split(/([ -~]+)/).map((part, i) =>
      /^[ -~]/.test(part) ? (
        <span key={i} className="font-['Liberation_Mono'] text-[16px] whitespace-pre">{part}</span>
      ) : (
        part
      ),
    )}
  </>
);

function CommandLine() {
  return (
    <section className="relative flex h-[129px] shrink-0">
      <div className="flex w-9 flex-col items-center bg-[#3a404d] pt-1">
        <TopGrip />
        <ToolButton label="关闭命令行" className="mt-[2px] h-6 w-8 pr-1"><Icon size={17}><path d="M3 3l20 20M23 3L3 23" strokeWidth="4" /></Icon></ToolButton>
        <ToolButton label="自定义" className="mt-[10px] h-7 w-8 pr-[2px]">
          <Icon size={24}><path d="M1 23L14 10c-1-4 1-8 5-9v5l4 2 2-1c0 5-4 8-8 7L4 26z" fill={W} stroke="none" /></Icon>
        </ToolButton>
      </div>
      <div className="flex min-w-0 flex-1 flex-col border-y border-[#15181d] bg-[#eaeaea] text-[20px] text-[#222]">
        <div className="flex-1 pt-1 pl-[3px]">
          {history.map((line) => (
            <p key={line} className="h-[22px] leading-[22px]"><ConsoleText text={line} /></p>
          ))}
        </div>
        <div className="flex h-[31px] shrink-0 items-center border-t-2 border-[#808080] bg-[#ececec] pl-[7px]">
          <svg width="24" height="24" viewBox="0 0 24 24" fill="none" stroke="#a9cfe3" strokeWidth="2" aria-hidden="true">
            <path d="M0 3h24M0 21h24M3 0v24M21 0v24" />
          </svg>
          <svg width="9" height="6" viewBox="0 0 9 6" className="mr-2 ml-[6px]" aria-hidden="true"><path d="M0 0h9L4 6z" fill="#999" /></svg>
          <label htmlFor="cmd" className="flex items-baseline gap-2">
            <b className="font-['Liberation_Mono'] text-[17px]">BOUNDARY</b>
            <span><ConsoleText text="拾取内部点:" /></span>
          </label>
          <input id="cmd" className="h-full min-w-0 flex-1 bg-transparent pl-1 outline-none" />
        </div>
      </div>
      <svg className="pointer-events-none absolute top-[78px] left-[65px] z-10" width="256" height="76" fill="none" aria-hidden="true">
        <ellipse cx="128" cy="38" rx="121" ry="31" stroke="#ff0000" strokeWidth="5" />
      </svg>
    </section>
  );
}

const group = "flex h-[35px] items-center bg-[#414857]";

function StatusBar() {
  const tab = "h-[27px] rounded-b-[10px] bg-[#363c47] text-[18px] leading-[27px] text-[#9a9ea6]";
  return (
    <footer className="relative flex h-11 shrink-0 items-start justify-between bg-[#2c313a] pr-[2px]">
      <div className="flex gap-1 pt-px pl-4">
        <button type="button" className={clsx(tab, "w-[72px] bg-[#454c5b] font-bold text-[#e4e5e8]")}>模型</button>
        <button type="button" className={clsx(tab, "w-[72px]")}>布局1</button>
        <button type="button" className={clsx(tab, "w-[80px]")}>布局2</button>
        <button type="button" className={clsx(tab, "w-9")} aria-label="新建布局">+</button>
      </div>

      {/* blurred presenter patch */}
      <div className="pointer-events-none absolute -top-7 left-[661px] h-[84px] w-[146px] bg-linear-to-b from-[#dcdcdc] via-[#a2a4a7] to-[#8b8e92] blur-[6px]" />

      <div className="flex gap-1 pt-1">
        <div className={clsx(group, "w-[45px] justify-center text-[18px] font-medium text-[#e4e5e8]")}>
          <button type="button">模型</button>
        </div>
        <div className={group}>
          <ToolButton label="栅格" className="w-[34px]"><Icon size={24}><path d="M7 1v24M14 1v24M20 1v24M1 7h24M1 13h24M1 20h24" /></Icon></ToolButton>
          <ToolButton label="捕捉模式" className="w-9">
            <Icon size={24}><path d="M3 4h22M3 13h22M3 22h22" strokeWidth="3" strokeDasharray="3 5" /></Icon>
          </ToolButton>
          <ToolButton label="捕捉设置" className="w-[25px]"><Caret /></ToolButton>
        </div>
        <div className={group}>
          <ToolButton label="正交" className="w-9"><Icon><path d="M3 1v23h22M4 15h7v8" /></Icon></ToolButton>
          <ToolButton label="极轴追踪" className="h-[33px] w-[34px] bg-[#6290bf]">
            <Icon><g stroke="#e8eef5"><circle cx="12" cy="14" r="10" /><path d="M12 14L21 2M12 14h13M18 9v9" /></g></Icon>
          </ToolButton>
          <ToolButton label="极轴设置" className="w-[26px]"><Caret /></ToolButton>
          <ToolButton label="等轴测草图" className="w-[34px]">
            <Icon><path d="M3 2l20 22" stroke="#b35b70" /><path d="M13 1v24" stroke="#56b384" /><path d="M11 11h4v4h-4z" fill={W} /></Icon>
          </ToolButton>
          <ToolButton label="等轴测设置" className="w-[27px]"><Caret /></ToolButton>
          <ToolButton label="对象捕捉追踪" className="h-[33px] w-[34px] bg-[#6290bf]">
            <Icon><g stroke="#e8eef5"><path d="M19 3L2 22h23" /><circle cx="10" cy="13" r="2" fill="#e8eef5" /></g></Icon>
          </ToolButton>
          <ToolButton label="二维对象捕捉" className="w-[38px]">
            <Icon><path d="M6 6h19v18H6z" /><path d="M1 1h8v8H1z" fill="#414857" stroke="#d99a78" /></Icon>
          </ToolButton>
          <ToolButton label="对象捕捉设置" className="w-[22px]"><Caret /></ToolButton>
        </div>
        <div className={group}>
          <ToolButton label="注释可见性" className="h-[33px] w-[35px] bg-[#6290bf]">
            <Icon><path d="M11 2l4 14 6 9-10-6-10 6 6-9z" fill="#eef3f8" stroke="none" /><circle cx="21" cy="6" r="4" stroke="#eef3f8" /></Icon>
          </ToolButton>
          <ToolButton label="自动缩放" className="w-9">
            <Icon><path d="M12 2l4 14 6 9-10-6-10 6 6-9z" fill={W} stroke="none" /><path d="M22 1l-5 7h4l-3 6 7-8h-4z" fill={W} stroke="none" /></Icon>
          </ToolButton>
          <ToolButton label="注释比例" className="w-9"><Icon><path d="M13 2l4 14 7 9-11-6-11 6 7-9z" fill={W} stroke="none" /></Icon></ToolButton>
          <button type="button" className="flex w-[50px] items-center justify-center gap-[7px] text-[16px] text-[#e4e5e8]">1:1 <Caret /></button>
        </div>
        <div className={group}>
          <ToolButton label="切换工作空间" className="w-9"><Gear size={25} /></ToolButton>
          <ToolButton label="工作空间设置" className="w-6"><Caret /></ToolButton>
        </div>
        <div className={clsx(group, "-ml-px")}>
          <ToolButton label="注释监视器" className="w-9"><Icon><path d="M13 1v24M1 13h24" strokeWidth="3" /></Icon></ToolButton>
        </div>
        <div className={group}>
          <ToolButton label="隔离对象" className="w-9"><Icon><path d="M2 2h9v10H2zM11 17l5 8H6z" /><circle cx="20" cy="12" r="5" /></Icon></ToolButton>
        </div>
        <div className={group}>
          <ToolButton label="硬件加速" className="w-9">
            <Icon><circle cx="13" cy="10" r="9" fill="#2f6fb3" stroke="none" /><path d="M7 1v12M1 7h14" stroke="#dbe9f7" /><path d="M2 16h8v8H2z" fill="#f0b32e" stroke="none" /><path d="M11 18l5 6 9-11" stroke={G} strokeWidth="4" /></Icon>
          </ToolButton>
          <ToolButton label="图形性能" className="w-9">
            <Icon><path d="M1 1h23v22H1z" fill="#c3c6ca" stroke="none" /><path d="M3 16l5-9 6 7 5-8 4 5" stroke="#6d737d" /><path d="M18 12l7 13H12z" fill="#e08a5f" stroke="none" /><path d="M18 17v5" stroke="#fff" strokeWidth="1.5" /></Icon>
          </ToolButton>
        </div>
        <div className={group}>
          <ToolButton label="全屏显示" className="w-9">
            <Icon><path d="M1 4h24v18H1z" /><path d="M21 7v6l-6-6zM5 19v-6l6 6z" fill={W} stroke="none" /></Icon>
          </ToolButton>
          <ToolButton label="自定义状态栏" className="w-9"><Icon><path d="M1 3h24M1 10h24M1 17h24M1 24h24" strokeWidth="3" /></Icon></ToolButton>
        </div>
      </div>
    </footer>
  );
}

function Watermark() {
  return (
    <div className="pointer-events-none absolute top-[18px] right-[7px] flex items-center text-[46px] leading-[52px] text-[#a4a8ae] opacity-60">
      <svg width="72" height="48" viewBox="0 0 74 48" fill="none" stroke="currentColor" strokeWidth="3" aria-hidden="true">
        <path d="M1 8c7 0 7 4 7 14s1 22 9 23" />
        <path d="M22 8l4-6 4 4h24l4-4 4 6c5 3 6 6 6 10v17c0 7-3 10-10 10H26c-8 0-10-3-10-10V18c0-5 2-8 6-10z" />
        <path d="M32 12h22M30 19h26M43 8v14M17 27h6M17 35h6M62 27h6M62 35h6" />
        <path d="M39 27l10 7-10 6z" fill="currentColor" stroke="none" />
      </svg>
      虎课网
    </div>
  );
}

export default function App() {
  return (
    <div className="h-screen min-h-[1000px] bg-[#0f0f0f] px-[10px] font-['Open_Sans','Noto_Sans_CJK_SC',sans-serif]">
      <div className="relative flex h-full flex-col bg-[#434a5a]">
        <div className="bg-[#2d323b]">
          <TitleBar />
          <MenuBar />
          <FileTabs />
        </div>
        <Toolbars />
        <div className="flex min-h-0 flex-1">
          <aside className="w-[43px] shrink-0">
            <div className="flex h-[666px] w-[35px] flex-col border border-[#333945]">
              <SideTools tools={drawTools} />
            </div>
          </aside>
          <Canvas />
          <aside className="w-12 shrink-0 pl-[5px]">
            <div className="flex h-[601px] w-[37px] flex-col border border-[#333945]">
              <SideTools tools={modifyTools} />
            </div>
          </aside>
        </div>
        <div className="h-1 shrink-0 bg-[#4a505e]" />
        <CommandLine />
        <StatusBar />
        <Watermark />
      </div>
    </div>
  );
}
